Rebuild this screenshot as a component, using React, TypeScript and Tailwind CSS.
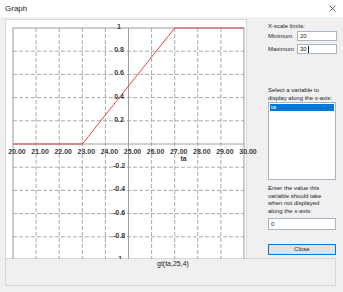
const X0 = 7
const XU = 23.1
const Y0 = 124
const YU = 116

const px = (v: number) => X0 + (v - 20) * XU
const py = (v: number) => Y0 - v * YU

const xTicks = [20, 21, 22, 23, 24, 25, 26, 27, 28, 29, 30]
const yTicks = [1, 0.8, 0.6, 0.4, 0.2, -0.2, -0.4, -0.6, -0.8, -1]

function Chart() {
  return (
    <svg width={242} height={239} className="block overflow-visible">
      <defs>
        <clipPath id="plotclip">
          <rect x={-10} y={0} width={270} height={239} />
        </clipPath>
      </defs>
      <g clipPath="url(#plotclip)">
        {xTicks.slice(1, -1).filter(v => v !== 25).map(v => (
          <line key={'vx' + v} x1={px(v)} y1={py(1)} x2={px(v)} y2={py(-1)} stroke="#ababab" strokeWidth={1} strokeDasharray="4 2" />
        ))}
        {yTicks.slice(1).map(v => (
          <line key={'hy' + v} x1={px(20)} y1={py(v)} x2={px(30)} y2={py(v)} stroke="#ababab" strokeWidth={1} strokeDasharray="4 2" />
        ))}
        <line x1={px(25)} y1={py(1)} x2={px(25)} y2={py(-1)} stroke="#a0a0a0" strokeWidth={1} />
        <line x1={px(20)} y1={py(0)} x2={px(30)} y2={py(0)} stroke="#a0a0a0" strokeWidth={1} />
        <rect x={px(20)} y={py(1)} width={px(30) - px(20)} height={py(-1) - py(1)} fill="none" stroke="#9a9a9a" strokeWidth={1} />
        <polyline
          points={`${px(20)},${py(0)} ${px(23)},${py(0)} ${px(27)},${py(1)} ${px(30)},${py(1)}`}
          fill="none"
          stroke="#e04a4a"
          strokeWidth={1}
        />
        <g fontFamily="'Liberation Sans', Arial, sans-serif" fontSize={7} fontWeight={700} fill="#3a3a3a">
          {xTicks.map(v => (
            <text key={'lx' + v} x={px(v) + 4} y={134} textAnchor="middle">{v.toFixed(2)}</text>
          ))}
          {yTicks.map(v => (
            <text key={'ly' + v} x={113} y={py(v) + 1} textAnchor="middle">{String(v)}</text>
          ))}
          <text x={177.5} y={141} textAnchor="middle">ta</text>
        </g>
      </g>
    </svg>
  )
}

export default function App() {
  return (
    <div className="w-[343px] h-[292px] bg-[#f0f0f0] flex flex-col overflow-hidden font-['Liberation_Sans',Arial,sans-serif] text-[#1e1e1e]">
      <div className="h-[17px] bg-white flex items-center justify-between pl-[5px] pr-[7px] shrink-0">
        <span className="text-[8px] leading-none">Graph</span>
        <svg width={7} height={7} viewBox="0 0 7 7">
          <path d="M0.5 0.5 L6.5 6.5 M6.5 0.5 L0.5 6.5" stroke="#444" strokeWidth={0.8} />
        </svg>
      </div>

      <div className="flex h-[241px] shrink-0">
        <div className="ml-[5px] mt-[2px] w-[242px] h-[239px] bg-white border-x border-t border-[#dadada] relative z-10">
          <Chart />
        </div>

        <div className="ml-[21px] w-[69px] flex flex-col text-[6px] leading-[8px] whitespace-nowrap">
          <p className="mt-[5px]">X-scale limits:</p>
          <div className="mt-[1px] flex items-center">
            <span className="w-[29px]">Minimum</span>
            <div className="w-[40px] h-[10px] bg-white border border-[#a9b4c2] pl-[2px] flex items-center">20</div>
          </div>
          <div className="mt-[3px] flex items-center">
            <span className="w-[29px]">Maximum</span>
            <div className="w-[40px] h-[10px] bg-white border border-[#a9b4c2] pl-[2px] flex items-center">
              30<span className="ml-[1px] w-px h-[7px] bg-[#222]" />
            </div>
          </div>

          <p className="mt-[32px]">Select a variable to</p>
          <p>display along the x-axis:</p>
          <div className="w-[68px] h-[78px] bg-white border border-[#a9b4c2] p-px">
            <div className="h-[7px] bg-[#0078d7] text-white leading-[7px] pl-[1px]">ta</div>
          </div>

          <div className="mt-[5px] leading-[7.7px]">
            <p>Enter the value this</p>
            <p>variable should take</p>
            <p>when not displayed</p>
            <p>along the x-axis:</p>
          </div>
          <div className="mt-[2px] w-[68px] h-[12px] bg-white border border-[#a9b4c2] pl-[2px] flex items-center">0</div>

          <button className="mt-[14px] w-[68px] h-[11px] bg-[#e1e1e1] border border-[#0078d7] flex items-center justify-center text-[6px]">
            Close
          </button>
        </div>
      </div>

      <div className="ml-[5px] w-[331px] h-[28px] border border-[#d6d6d6] shrink-0">
        <p className="pl-[151px] text-[7px] leading-[7px] mt-px">gt(ta,25,4)</p>
      </div>
    </div>
  )
}
